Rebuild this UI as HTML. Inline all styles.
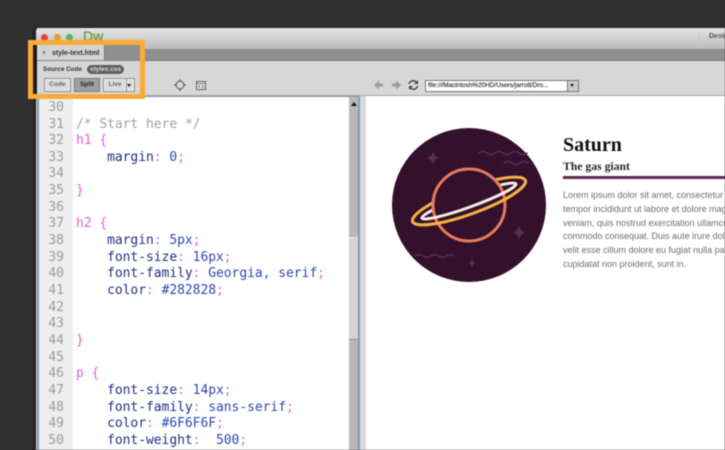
<!DOCTYPE html>
<html><head><meta charset="utf-8"><style>
html,body{margin:0;padding:0;background:#303030;}
#p{position:relative;width:725px;height:450px;overflow:hidden;background:#303030;font-family:"Liberation Sans",sans-serif;filter:blur(0.4px);}
.a{position:absolute;}
.t{position:absolute;white-space:pre;}
.ln{position:absolute;left:34px;width:30px;text-align:right;font:13px/17px "DejaVu Sans Mono",monospace;color:#9c9c9c;}
.c{position:absolute;left:76px;white-space:pre;font:13px/17px "DejaVu Sans Mono",monospace;letter-spacing:-.05px;color:#232f84;}
.k{color:#e25fd8;}.g{color:#a3a3a3;}.v{color:#2f48b4;}
.btn{position:absolute;top:78px;height:12px;background:#dcdcdc;border:1px solid #8f8f8f;box-shadow:inset 0 0 0 1px #eee;font:bold 6.500px/12px "Liberation Sans",sans-serif;text-align:center;color:#6a6a6a;}
</style></head><body><div id="p">
<!-- window -->
<div class="a" style="left:36px;top:28px;width:689px;height:422px;background:#d6d6d6;border-radius:3px 0 0 0;box-shadow:-2px 0 3px #1c1c1c;"></div>
<div class="a" style="left:37px;top:28px;width:688px;height:21px;background:linear-gradient(#e4e4e4,#bcbcbc);border-bottom:1px solid #8a8a8a;"></div>
<div class="a" style="left:37px;top:50px;width:688px;height:10px;background:#8f8f8f;border-bottom:1px solid #777;"></div>
<div class="a" style="left:37px;top:61px;width:688px;height:34px;background:#d7d7d7;border-bottom:1px solid #a5a5a5;"></div>
<div class="a" style="left:41px;top:34px;width:7px;height:7px;border-radius:50%;background:#e0433c;"></div>
<div class="a" style="left:54px;top:34px;width:7px;height:7px;border-radius:50%;background:#e0a030;"></div>
<div class="a" style="left:66px;top:34px;width:7px;height:7px;border-radius:50%;background:#5cb85c;"></div>
<div class="t" style="left:83px;top:28px;font:14px/16px 'Liberation Sans',sans-serif;color:#6f9a3c;-webkit-text-stroke:.3px #6f9a3c;">Dw</div>
<div class="a" style="left:699px;top:32px;width:1px;height:15px;background:#c8c8c8;"></div>
<div class="t" style="left:709px;top:32px;font:bold 7px/10px 'Liberation Sans',sans-serif;color:#555;">Design</div>
<!-- toolbar icons -->
<svg class="a" style="left:170px;top:76px;" width="60" height="18" viewBox="0 0 60 18">
<circle cx="10" cy="9" r="4" fill="none" stroke="#555" stroke-width="1"/>
<path d="M10 3v3M10 12v3M4 9h3M13 9h3" stroke="#555" stroke-width="1"/>
<rect x="26.500" y="5.500" width="9" height="8" fill="#e4e4e4" stroke="#666"/>
<path d="M26.500 7.500h9M30 9l-1.500 1.500L30 12M32 9l1.500 1.500L32 12" fill="none" stroke="#666" stroke-width=".7"/>
</svg>
<svg class="a" style="left:372px;top:78px;" width="50" height="14" viewBox="0 0 50 14">
<path d="M2 7l5-4.500v3h4v3H7v3z" fill="#9c9c9c"/>
<path d="M29 7l-5-4.500v3h-4v3h4v3z" fill="#9c9c9c"/>
<path d="M37 6a4.200 4.200 0 0 1 7.500-1.500M45.500 8a4.200 4.200 0 0 1-7.500 1.500" fill="none" stroke="#444" stroke-width="1.400"/>
<path d="M46 2v4h-4zM37 12V8h4z" fill="#444"/>
</svg>
<div class="a" style="left:425px;top:80px;width:141px;height:10px;background:#fff;border:1px solid #777;font:6.400px/10px 'Liberation Sans',sans-serif;color:#333;-webkit-text-stroke:.15px #333;white-space:pre;overflow:hidden;text-indent:2px;">file:///Macintosh%20HD/Users/jarrott/Dro...</div>
<div class="a" style="left:567px;top:80px;width:10px;height:10px;background:#ccc;border:1px solid #777;"></div>
<div class="a" style="left:570px;top:84px;border:2.500px solid transparent;border-top:3px solid #222;border-bottom:0;"></div>
<!-- code pane -->
<div class="a" style="left:37px;top:96px;width:323px;height:354px;background:#fff;"></div>
<div class="a" style="left:37px;top:96px;width:323px;height:1px;background:#7d9dba;"></div>
<div class="a" style="left:37px;top:96px;width:2px;height:354px;background:#7d9dba;"></div>
<div class="a" style="left:39px;top:97px;width:34px;height:353px;background:#eeeeee;"></div>
<div class="a" style="left:349px;top:97px;width:9px;height:353px;background:#b8b8b8;"></div>
<div class="a" style="left:358px;top:97px;width:2px;height:353px;background:#7d9dba;"></div>
<div class="a" style="left:351px;top:102px;border:3px solid transparent;border-bottom:4px solid #111;border-top:0;"></div>
<div class="a" style="left:349px;top:237px;width:9px;height:103px;background:#d4d4d4;border-top:1px solid #eee;border-bottom:1px solid #888;box-sizing:border-box;"></div>
<div class="a" style="left:360px;top:96px;width:6px;height:354px;background:#d9d9d9;"></div>
<!-- line numbers -->
<div class="ln" style="top:99px">30</div><div class="ln" style="top:116px">31</div><div class="ln" style="top:132px">32</div><div class="ln" style="top:149px">33</div><div class="ln" style="top:165px">34</div><div class="ln" style="top:182px">35</div><div class="ln" style="top:199px">36</div><div class="ln" style="top:215px">37</div><div class="ln" style="top:232px">38</div><div class="ln" style="top:249px">39</div><div class="ln" style="top:265px">40</div><div class="ln" style="top:282px">41</div><div class="ln" style="top:299px">42</div><div class="ln" style="top:315px">43</div><div class="ln" style="top:332px">44</div><div class="ln" style="top:349px">45</div><div class="ln" style="top:365px">46</div><div class="ln" style="top:382px">47</div><div class="ln" style="top:399px">48</div><div class="ln" style="top:415px">49</div><div class="ln" style="top:432px">50</div>
<!-- code -->
<div class="c g" style="top:116px">/* Start here */</div>
<div class="c k" style="top:132px">h1 {</div>
<div class="c" style="top:149px">    margin<span class="k">:</span> <span class="v">0</span><span class="k">;</span></div>
<div class="c k" style="top:182px">}</div>
<div class="c k" style="top:215px">h2 {</div>
<div class="c" style="top:232px">    margin<span class="k">:</span> <span class="v">5px</span><span class="k">;</span></div>
<div class="c" style="top:249px">    font-size<span class="k">:</span> <span class="v">16px</span><span class="k">;</span></div>
<div class="c" style="top:265px">    font-family<span class="k">:</span> <span class="v">Georgia, serif</span><span class="k">;</span></div>
<div class="c" style="top:282px">    color<span class="k">:</span> <span class="v">#282828</span><span class="k">;</span></div>
<div class="c k" style="top:332px">}</div>
<div class="c k" style="top:365px">p {</div>
<div class="c" style="top:382px">    font-size<span class="k">:</span> <span class="v">14px</span><span class="k">;</span></div>
<div class="c" style="top:399px">    font-family<span class="k">:</span> <span class="v">sans-serif</span><span class="k">;</span></div>
<div class="c" style="top:415px">    color<span class="k">:</span> <span class="v">#6F6F6F</span><span class="k">;</span></div>
<div class="c" style="top:432px">    font-weight<span class="k">:</span>  <span class="v">500</span><span class="k">;</span></div>
<!-- preview -->
<div class="a" style="left:366px;top:96px;width:359px;height:354px;background:#fff;"></div>
<svg class="a" style="left:380px;top:115px;" width="180" height="175" viewBox="0 0 180 175">
<defs><clipPath id="f"><rect x="-80" y="0" width="160" height="30"/></clipPath></defs>
<circle cx="89" cy="90" r="77" fill="#33112d"/>
<g fill="#5a2b52">
<path d="M53 36q.8 5.500 6 7q-5.200 1.500-6 7q-.8-5.500-6-7q5.200-1.500 6-7z"/>
<path d="M139 110q.9 6 6 7.500q-5.100 1.500-6 7.500q-.9-6-6-7.500q5.100-1.500 6-7.500z"/>
<path d="M92 143q.5 4 3.500 5q-3 1-3.500 5q-.5-4-3.500-5q3-1 3.500-5z"/>
</g>
<g fill="none" stroke="#5a2b52" stroke-width="1.500" stroke-linecap="round">
<path d="M99 38q4-3 8 0t8 0t8 0t8 0t8 0t8 0"/>
<path d="M124 48q4-3 8 0t8 0t8 0"/>
<path d="M35 141q4-3 8 0t8 0t8 0t8 0t6 0"/>
</g>
<g transform="translate(89 86) rotate(-20)">
<ellipse rx="60" ry="13" fill="none" stroke="#f4b040" stroke-width="3"/>
<ellipse rx="50" ry="6" fill="none" stroke="#f5e8e2" stroke-width="3"/>
</g>
<circle cx="89" cy="90" r="36" fill="#33112d" stroke="#e8795a" stroke-width="3"/>
<g transform="translate(89 86) rotate(-20)" clip-path="url(#f)">
<ellipse rx="60" ry="13" fill="none" stroke="#f4b040" stroke-width="3"/>
<ellipse rx="50" ry="6" fill="none" stroke="#f5e8e2" stroke-width="3"/>
</g>
</svg>
<div class="t" style="left:563px;top:134px;font:bold 20px/22px 'Liberation Serif',serif;color:#111;">Saturn</div>
<div class="t" style="left:563px;top:160px;font:bold 11.700px/13px 'Liberation Serif',serif;color:#282828;">The gas giant</div>
<div class="a" style="left:563px;top:176px;width:162px;height:3px;background:#5f2c4f;"></div>
<div class="t" style="left:563px;top:189px;font:9px/13.800px 'Liberation Sans',sans-serif;color:#6f6f6f;">Lorem ipsum dolor sit amet, consectetur adipisicing
tempor incididunt ut labore et dolore magna aliqua.
veniam, quis nostrud exercitation ullamco laboris
commodo consequat. Duis aute irure dolor in
velit esse cillum dolore eu fugiat nulla pariatur.
cupidatat non proident, sunt in.</div>
<!-- highlight box -->
<div class="a" style="left:33px;top:45px;width:4px;height:49px;background:#1e1e1e;"></div>
<div class="a" style="left:37px;top:45px;width:103px;height:12px;background:#8f8f8f;"></div>
<div class="a" style="left:37px;top:45px;width:67px;height:15px;background:#d4d4d4;border-right:1px solid #777;"></div>
<div class="a" style="left:37px;top:60px;width:103px;height:1px;background:#8a8a8a;"></div>
<div class="a" style="left:37px;top:61px;width:103px;height:33px;background:#d6d6d6;"></div>
<div class="t" style="left:42px;top:50px;font:7px/8px 'Liberation Sans',sans-serif;color:#444;">×</div>
<div class="t" style="left:52px;top:50px;font:bold 7px/8px 'Liberation Sans',sans-serif;color:#333;">style-text.html</div>
<div class="t" style="left:43px;top:65px;font:bold 6.300px/9px 'Liberation Sans',sans-serif;color:#333;">Source Code</div>
<div class="a" style="left:87px;top:65px;width:37px;height:9px;border-radius:5px;background:#5f5f5f;font:bold 6.500px/9px 'Liberation Sans',sans-serif;color:#ddd;text-align:center;">styles.css</div>
<div class="btn" style="left:44px;width:25px;">Code</div>
<div class="btn" style="left:74px;width:24px;background:#a0a0a0;box-shadow:none;color:#222;border-color:#777;">Split</div>
<div class="btn" style="left:103px;width:22px;">Live</div>
<div class="btn" style="left:126px;width:7px;"></div>
<div class="a" style="left:127px;top:84px;border:2.500px solid transparent;border-top:3px solid #222;border-bottom:0;"></div>
<div class="a" style="left:28px;top:40px;width:107px;height:49px;border:5px solid #f9ab35;"></div>
</div></body></html>
